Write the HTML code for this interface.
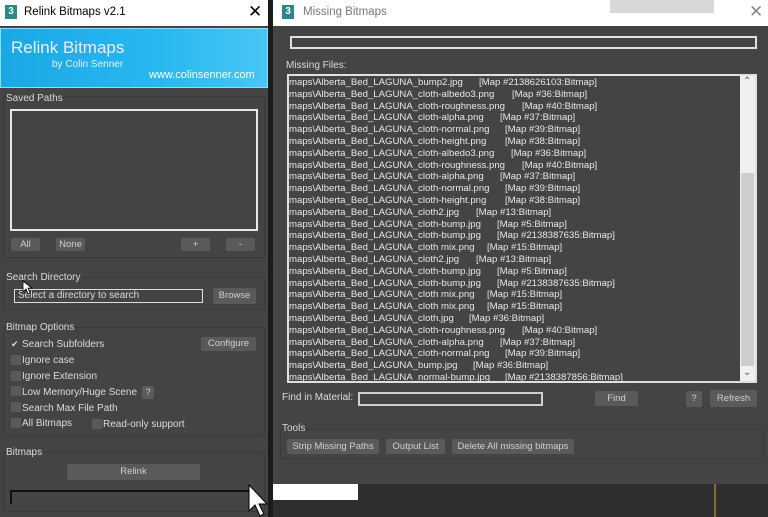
<!DOCTYPE html>
<html><head><meta charset="utf-8"><style>
*{margin:0;padding:0;box-sizing:border-box}
body{width:768px;height:517px;overflow:hidden;background:#2e2e2e;font-family:"Liberation Sans",sans-serif;font-size:10px;color:#dcdcdc;position:relative}
.a{position:absolute;white-space:nowrap}
.btn{position:absolute;background:#5a5a5a;color:#d0d0d0;border-radius:2px;text-align:center;font-size:9.5px;white-space:nowrap}
.grp{position:absolute;border:1px solid #3a3a3a;border-radius:2px}
.cb{position:absolute;width:10px;height:10px;background:#5a5a5a}
.row{position:absolute;left:289px;white-space:nowrap;color:#e8e8e8;font-size:9.6px;line-height:11px}
.row span{position:absolute}
</style></head><body>
<div class="a" style="left:0;top:0;width:268px;height:517px;background:#444"></div>
<div class="a" style="left:0;top:0;width:268px;height:26px;background:#fff;color:#000;font-size:11.5px">
<div class="a" style="left:5px;top:5px;width:12px;height:14px;background:#2a8a8a;color:#fff;font-size:10px;font-weight:bold;text-align:center;line-height:14px">3</div>
<div class="a" style="left:24px;top:6px">Relink Bitmaps v2.1</div>
<div class="a" style="left:248px;top:2px;font-size:17px">✕</div></div>
<div class="a" style="left:0;top:28px;width:268px;height:60px;background:linear-gradient(90deg,#1aa8e6,#28b8f0 60%,#47c6f4);border:1px solid #8fdcff">
<div class="a" style="left:10px;top:9px;font-size:17px;color:#eef">Relink Bitmaps</div>
<div class="a" style="left:51px;top:30px;font-size:10px;color:#eef">by Colin Senner</div>
<div class="a" style="left:148px;top:40px;font-size:11px;color:#fff">www.colinsenner.com</div></div>
<div class="grp" style="left:3px;top:96px;width:262px;height:162px"></div>
<div class="a" style="left:6px;top:93px">Saved Paths</div>
<div class="a" style="left:10px;top:109px;width:248px;height:122px;border:2px solid #e8e8e8;background:#444"></div>
<div class="btn" style="left:11px;top:238px;width:29px;height:13px;line-height:13px">All</div>
<div class="btn" style="left:56px;top:238px;width:29px;height:13px;line-height:13px">None</div>
<div class="btn" style="left:181px;top:238px;width:29px;height:13px;line-height:13px">+</div>
<div class="btn" style="left:226px;top:238px;width:29px;height:13px;line-height:13px">-</div>
<div class="grp" style="left:3px;top:277px;width:262px;height:33px"></div>
<div class="a" style="left:6px;top:272px">Search Directory</div>
<div class="a" style="left:14px;top:289px;width:189px;height:14px;border:1px solid #ddd;padding-left:3px;line-height:12px">Select a directory to search</div>
<div class="btn" style="left:213px;top:288px;width:43px;height:16px;line-height:16px">Browse</div>
<div class="grp" style="left:3px;top:327px;width:262px;height:109px"></div>
<div class="a" style="left:6px;top:322px">Bitmap Options</div>
<div class="a" style="left:11px;top:339px;font-size:9px">✔</div><div class="a" style="left:22px;top:339px">Search Subfolders</div>
<div class="btn" style="left:201px;top:337px;width:55px;height:14px;line-height:14px">Configure</div>
<div class="cb" style="left:11px;top:355px"></div><div class="a" style="left:22px;top:355px">Ignore case</div>
<div class="cb" style="left:11px;top:371px"></div><div class="a" style="left:22px;top:371px">Ignore Extension</div>
<div class="cb" style="left:11px;top:386px"></div><div class="a" style="left:22px;top:387px">Low Memory/Huge Scene</div>
<div class="btn" style="left:142px;top:386px;width:12px;height:13px;line-height:13px">?</div>
<div class="cb" style="left:11px;top:402px"></div><div class="a" style="left:22px;top:403px">Search Max File Path</div>
<div class="cb" style="left:11px;top:418px"></div><div class="a" style="left:22px;top:418px">All Bitmaps</div>
<div class="cb" style="left:92px;top:419px"></div><div class="a" style="left:103px;top:419px">Read-only support</div>
<div class="grp" style="left:3px;top:452px;width:262px;height:60px"></div>
<div class="a" style="left:6px;top:447px">Bitmaps</div>
<div class="btn" style="left:67px;top:464px;width:133px;height:16px;line-height:16px">Relink</div>
<div class="a" style="left:10px;top:490px;width:240px;height:14px;border-top:2px solid #111;border-left:2px solid #111"></div>
<div class="a" style="left:268px;top:0;width:5px;height:517px;background:#1b1b1b"></div>
<div class="a" style="left:273px;top:484px;width:85px;height:16px;background:#fff"></div>
<div class="a" style="left:714px;top:484px;width:2px;height:33px;background:#8a6a20"></div>
<div class="a" style="left:273px;top:0;width:495px;height:26px;background:#fff;color:#777;font-size:11.5px">
<div class="a" style="left:9px;top:5px;width:12px;height:14px;background:#2a8a8a;color:#fff;font-size:10px;font-weight:bold;text-align:center;line-height:14px">3</div>
<div class="a" style="left:30px;top:6px">Missing Bitmaps</div>
<div class="a" style="left:337px;top:0;width:104px;height:13px;background:#d8d8d8"></div>
<div class="a" style="left:476px;top:2px;font-size:17px;color:#888">✕</div></div>
<div class="a" style="left:273px;top:26px;width:495px;height:458px;background:#444"></div>
<div class="a" style="left:290px;top:36px;width:467px;height:13px;border:2px solid #e0e0e0"></div>
<div class="a" style="left:286px;top:60px">Missing Files:</div>
<div class="a" style="left:287px;top:74px;width:470px;height:309px;border:2px solid #e0e0e0;background:#444"></div>
<div class="a" style="left:740px;top:76px;width:15px;height:305px;background:#f0f0f0"></div>
<div class="a" style="left:741px;top:173px;width:13px;height:193px;background:#cdcdcd"></div>
<div class="a" style="left:743px;top:76px;color:#555;font-size:10px">&#x2303;</div>
<div class="a" style="left:743px;top:367px;color:#555;font-size:10px">&#x2304;</div>
<div class="row" style="top:77px">maps\Alberta_Bed_LAGUNA_bump2.jpg<span style="left:190px">[Map #2138626103:Bitmap]</span></div>
<div class="row" style="top:89px">maps\Alberta_Bed_LAGUNA_cloth-albedo3.png<span style="left:223px">[Map #36:Bitmap]</span></div>
<div class="row" style="top:100.6px">maps\Alberta_Bed_LAGUNA_cloth-roughness.png<span style="left:233px">[Map #40:Bitmap]</span></div>
<div class="row" style="top:112.4px">maps\Alberta_Bed_LAGUNA_cloth-alpha.png<span style="left:211px">[Map #37:Bitmap]</span></div>
<div class="row" style="top:124.2px">maps\Alberta_Bed_LAGUNA_cloth-normal.png<span style="left:216px">[Map #39:Bitmap]</span></div>
<div class="row" style="top:136px">maps\Alberta_Bed_LAGUNA_cloth-height.png<span style="left:216px">[Map #38:Bitmap]</span></div>
<div class="row" style="top:147.8px">maps\Alberta_Bed_LAGUNA_cloth-albedo3.png<span style="left:222px">[Map #36:Bitmap]</span></div>
<div class="row" style="top:159.6px">maps\Alberta_Bed_LAGUNA_cloth-roughness.png<span style="left:233px">[Map #40:Bitmap]</span></div>
<div class="row" style="top:171.4px">maps\Alberta_Bed_LAGUNA_cloth-alpha.png<span style="left:211px">[Map #37:Bitmap]</span></div>
<div class="row" style="top:183.2px">maps\Alberta_Bed_LAGUNA_cloth-normal.png<span style="left:216px">[Map #39:Bitmap]</span></div>
<div class="row" style="top:195px">maps\Alberta_Bed_LAGUNA_cloth-height.png<span style="left:216px">[Map #38:Bitmap]</span></div>
<div class="row" style="top:206.8px">maps\Alberta_Bed_LAGUNA_cloth2.jpg<span style="left:187px">[Map #13:Bitmap]</span></div>
<div class="row" style="top:218.6px">maps\Alberta_Bed_LAGUNA_cloth-bump.jpg<span style="left:208px">[Map #5:Bitmap]</span></div>
<div class="row" style="top:230.4px">maps\Alberta_Bed_LAGUNA_cloth-bump.jpg<span style="left:208px">[Map #2138387635:Bitmap]</span></div>
<div class="row" style="top:242.2px">maps\Alberta_Bed_LAGUNA_cloth mix.png<span style="left:198px">[Map #15:Bitmap]</span></div>
<div class="row" style="top:254px">maps\Alberta_Bed_LAGUNA_cloth2.jpg<span style="left:187px">[Map #13:Bitmap]</span></div>
<div class="row" style="top:265.8px">maps\Alberta_Bed_LAGUNA_cloth-bump.jpg<span style="left:208px">[Map #5:Bitmap]</span></div>
<div class="row" style="top:277.6px">maps\Alberta_Bed_LAGUNA_cloth-bump.jpg<span style="left:208px">[Map #2138387635:Bitmap]</span></div>
<div class="row" style="top:289.4px">maps\Alberta_Bed_LAGUNA_cloth mix.png<span style="left:198px">[Map #15:Bitmap]</span></div>
<div class="row" style="top:301.2px">maps\Alberta_Bed_LAGUNA_cloth mix.png<span style="left:198px">[Map #15:Bitmap]</span></div>
<div class="row" style="top:313px">maps\Alberta_Bed_LAGUNA_cloth.jpg<span style="left:180px">[Map #36:Bitmap]</span></div>
<div class="row" style="top:324.8px">maps\Alberta_Bed_LAGUNA_cloth-roughness.png<span style="left:233px">[Map #40:Bitmap]</span></div>
<div class="row" style="top:336.6px">maps\Alberta_Bed_LAGUNA_cloth-alpha.png<span style="left:211px">[Map #37:Bitmap]</span></div>
<div class="row" style="top:348.4px">maps\Alberta_Bed_LAGUNA_cloth-normal.png<span style="left:216px">[Map #39:Bitmap]</span></div>
<div class="row" style="top:360.2px">maps\Alberta_Bed_LAGUNA_bump.jpg<span style="left:184px">[Map #36:Bitmap]</span></div>
<div class="row" style="top:372px">maps\Alberta_Bed_LAGUNA_normal-bump.jpg<span style="left:216px">[Map #2138387856:Bitmap]</span></div>
<div class="a" style="left:282px;top:392px">Find in Material:</div>
<div class="a" style="left:358px;top:392px;width:185px;height:14px;border:2px solid #d0d0d0"></div>
<div class="btn" style="left:595px;top:391px;width:43px;height:15px;line-height:15px">Find</div>
<div class="btn" style="left:686px;top:391px;width:16px;height:16px;line-height:16px">?</div>
<div class="btn" style="left:710px;top:390px;width:47px;height:17px;line-height:17px">Refresh</div>
<div class="grp" style="left:280px;top:429px;width:484px;height:30px"></div>
<div class="a" style="left:282px;top:423px">Tools</div>
<div class="btn" style="left:287px;top:439px;width:92px;height:15px;line-height:15px">Strip Missing Paths</div>
<div class="btn" style="left:386px;top:439px;width:59px;height:15px;line-height:15px">Output List</div>
<div class="btn" style="left:452px;top:439px;width:122px;height:15px;line-height:15px">Delete All missing bitmaps</div>
<svg class="a" style="left:247px;top:484px" width="24" height="33"><path d="M2 1 L2 27 L8 21 L13 32 L17 30 L12 20 L20 20 Z" fill="#fff" stroke="#000" stroke-width="1"/></svg>
<svg class="a" style="left:22px;top:280px" width="12" height="16"><path d="M1 1 L1 12 L4 9 L6 14 L8 13 L6 8 L10 8 Z" fill="#fff" stroke="#000" stroke-width="0.8"/></svg>
</body></html>
